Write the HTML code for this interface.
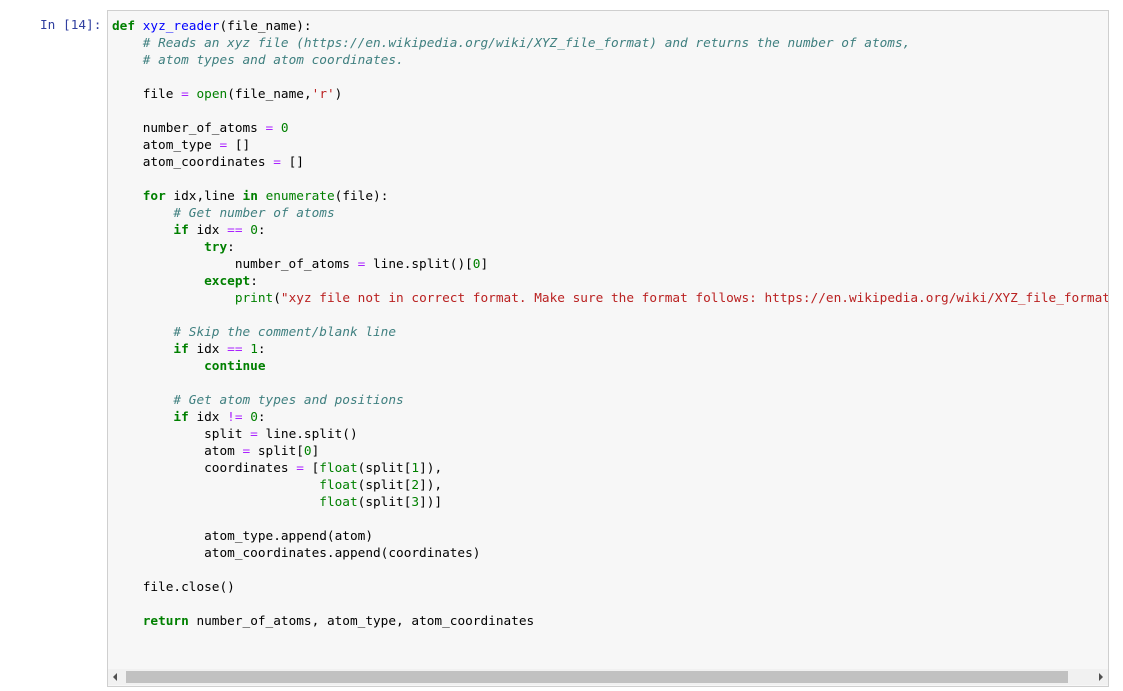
<!DOCTYPE html>
<html><head><meta charset="utf-8"><style>
body{margin:0;background:#fff;width:1123px;height:691px;overflow:hidden;position:relative;font-family:"DejaVu Sans Mono","Liberation Mono",monospace;}
.p{position:absolute;left:40px;top:17px;font-size:12.75px;line-height:17px;color:#303F9F;}
.box{position:absolute;left:107px;top:10px;width:1000px;height:675px;background:#f7f7f7;border:1px solid #cfcfcf;overflow:hidden;}
pre{margin:0;position:absolute;left:4px;top:7px;font-family:inherit;font-size:12.75px;line-height:17px;color:#000;white-space:pre;}
.k{color:#008000;font-weight:bold}.b{color:#008000}.c{color:#408080;font-style:italic}.s{color:#BA2121}.n{color:#008000}.o{color:#AA22FF}.f{color:#0000FF}
.sb{position:absolute;left:0;top:658px;width:1000px;height:16px;background:#f1f1f1;}
.th{position:absolute;left:18px;top:2px;width:942px;height:12px;background:#c1c1c1;}
.al{position:absolute;left:5px;top:4px;width:0;height:0;border-top:4px solid transparent;border-bottom:4px solid transparent;border-right:4px solid #505050;}
.ar{position:absolute;right:5px;top:4px;width:0;height:0;border-top:4px solid transparent;border-bottom:4px solid transparent;border-left:4px solid #505050;}
</style></head><body>
<div class="p">In [14]:</div>
<div class="box"><pre><span class="k">def</span> <span class="f">xyz_reader</span>(file_name):
    <span class="c"># Reads an xyz file (https://en.wikipedia.org/wiki/XYZ_file_format) and returns the number of atoms,</span>
    <span class="c"># atom types and atom coordinates.</span>

    file <span class="o">=</span> <span class="b">open</span>(file_name,<span class="s">'r'</span>)

    number_of_atoms <span class="o">=</span> <span class="n">0</span>
    atom_type <span class="o">=</span> []
    atom_coordinates <span class="o">=</span> []

    <span class="k">for</span> idx,line <span class="ow k">in</span> <span class="b">enumerate</span>(file):
        <span class="c"># Get number of atoms</span>
        <span class="k">if</span> idx <span class="o">==</span> <span class="n">0</span>:
            <span class="k">try</span>:
                number_of_atoms <span class="o">=</span> line.split()[<span class="n">0</span>]
            <span class="k">except</span>:
                <span class="b">print</span>(<span class="s">"xyz file not in correct format. Make sure the format follows: https://en.wikipedia.org/wiki/XYZ_file_format"</span>)

        <span class="c"># Skip the comment/blank line</span>
        <span class="k">if</span> idx <span class="o">==</span> <span class="n">1</span>:
            <span class="k">continue</span>

        <span class="c"># Get atom types and positions</span>
        <span class="k">if</span> idx <span class="o">!=</span> <span class="n">0</span>:
            split <span class="o">=</span> line.split()
            atom <span class="o">=</span> split[<span class="n">0</span>]
            coordinates <span class="o">=</span> [<span class="b">float</span>(split[<span class="n">1</span>]),
                           <span class="b">float</span>(split[<span class="n">2</span>]),
                           <span class="b">float</span>(split[<span class="n">3</span>])]

            atom_type.append(atom)
            atom_coordinates.append(coordinates)

    file.close()

    <span class="k">return</span> number_of_atoms, atom_type, atom_coordinates</pre>
<div class="sb"><div class="al"></div><div class="th"></div><div class="ar"></div></div>
</div>
</body></html>
